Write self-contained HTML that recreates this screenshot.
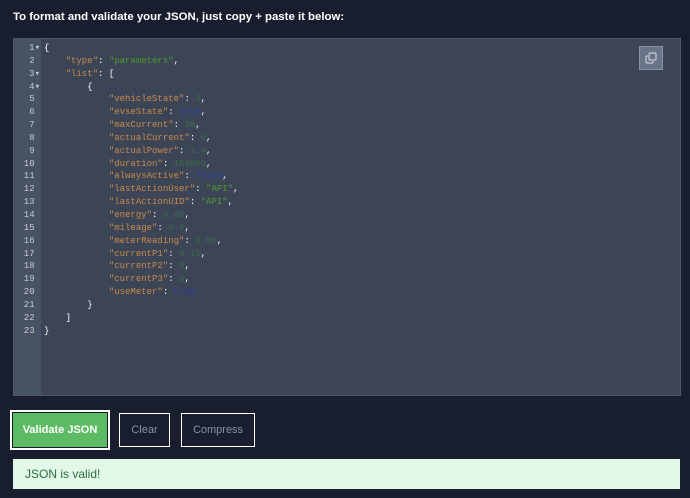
<!DOCTYPE html><html><head><style>
body{margin:0;width:690px;height:498px;background:#181e2d;font-family:"Liberation Sans",sans-serif;overflow:hidden;position:relative}
.t{position:absolute;left:13px;top:11px;color:#fff;font-weight:bold;font-size:11.4px}
.ed{position:absolute;left:13px;top:38px;width:666px;height:356px;background:#3b4556;border:1px solid #4d5768}
.g{position:absolute;left:0;top:0;width:27px;height:100%;background:#475264}
pre{margin:0;position:absolute;top:3px;font-family:"Liberation Mono",monospace;font-size:9px;line-height:12.85px;color:#fff}
.n{left:0;width:26px;text-align:right;color:#c8ccd4}
.c{left:30px}
.k{color:#c98a4b}.s{color:#4e9a2e}.m{color:#3d6a4c}.b{color:#2b3d9f}
.cp{position:absolute;left:625px;top:7px;width:22px;height:22px;background:#6a7488;border:1px solid #8a93a4}
.btn{position:absolute;font-size:11px;display:flex;align-items:center;justify-content:center;box-sizing:border-box;white-space:nowrap}
.r{position:absolute;left:13px;top:459px;width:667px;height:30px;background:#e1f8e8;color:#2e6b3c;font-size:12px;line-height:30px;padding-left:12px;box-sizing:border-box}
</style></head><body>
<div class="t">To format and validate your JSON, just copy + paste it below:</div>
<div class="ed"><div class="g"></div>
<pre class="n">1▾
2 
3▾
4▾
5 
6 
7 
8 
9 
10 
11 
12 
13 
14 
15 
16 
17 
18 
19 
20 
21 
22 
23 </pre>
<pre class="c">{
    <span class="k">"type"</span>: <span class="s">"parameters"</span>,
    <span class="k">"list"</span>: [
        {
            <span class="k">"vehicleState"</span>: <span class="m">3</span>,
            <span class="k">"evseState"</span>: <span class="b">true</span>,
            <span class="k">"maxCurrent"</span>: <span class="m">20</span>,
            <span class="k">"actualCurrent"</span>: <span class="m">6</span>,
            <span class="k">"actualPower"</span>: <span class="m">1.4</span>,
            <span class="k">"duration"</span>: <span class="m">164000</span>,
            <span class="k">"alwaysActive"</span>: <span class="b">false</span>,
            <span class="k">"lastActionUser"</span>: <span class="s">"API"</span>,
            <span class="k">"lastActionUID"</span>: <span class="s">"API"</span>,
            <span class="k">"energy"</span>: <span class="m">0.06</span>,
            <span class="k">"mileage"</span>: <span class="m">0.4</span>,
            <span class="k">"meterReading"</span>: <span class="m">0.06</span>,
            <span class="k">"currentP1"</span>: <span class="m">6.15</span>,
            <span class="k">"currentP2"</span>: <span class="m">0</span>,
            <span class="k">"currentP3"</span>: <span class="m">0</span>,
            <span class="k">"useMeter"</span>: <span class="b">true</span>
        }
    ]
}</pre>
<div class="cp"><svg width="22" height="22" viewBox="0 0 22 22" fill="none" stroke="#c8ccd4" stroke-width="1.2"><rect x="9" y="6" width="7" height="7" rx="1"/><path d="M8 9H7a1 1 0 0 0-1 1v5a1 1 0 0 0 1 1h5a1 1 0 0 0 1-1v-1"/></svg></div>
</div>
<div class="btn" style="left:10px;top:410px;width:100px;height:40px;border:2px solid #fff;background:#5cbb63;color:#fff;font-weight:bold;font-size:11px;box-shadow:inset 0 0 0 1px #181e2d">Validate JSON</div>
<div class="btn" style="left:119px;top:413px;width:51px;height:34px;border:1.5px solid #fff;color:#8a92a2">Clear</div>
<div class="btn" style="left:181px;top:413px;width:74px;height:34px;border:1.5px solid #fff;color:#8a92a2">Compress</div>
<div class="r">JSON is valid!</div>
</body></html>
